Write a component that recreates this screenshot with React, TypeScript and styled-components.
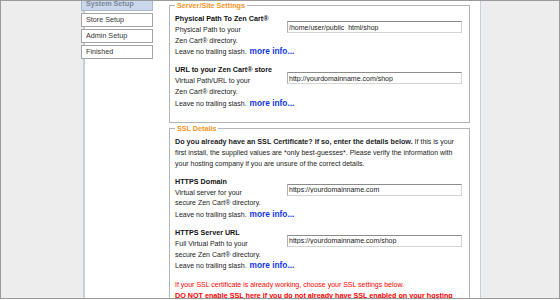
import React from "react";
import styled, { createGlobalStyle } from "styled-components";

const GlobalStyle = createGlobalStyle`
  html, body {
    margin: 0;
    padding: 0;
    background: #fff;
  }
  body {
    font-family: "Liberation Sans", Arial, sans-serif;
    color: #222;
  }
`;

const Frame = styled.div`
  width: 560px;
  height: 299px;
  box-sizing: border-box;
  border: 1px solid #9a9a9a;
  display: flex;
  overflow: hidden;
`;

const Gutter = styled.div<{ $side: "left" | "right" }>`
  flex: none;
  width: ${p => (p.$side === "left" ? "82px" : "78px")};
  background: #ededed;
  ${p => (p.$side === "left" ? "border-right: 2px solid #c6cfd9;" : "border-left: 1px solid #c6cfd9;")}
`;

const Main = styled.div`
  flex: none;
  width: 395px;
  display: flex;
  align-items: flex-start;
  background: #fff;
`;

const Nav = styled.nav`
  flex: none;
  width: 72px;
  margin: -4px 0 0 -4px;
  display: flex;
  flex-direction: column;
  gap: 2px;
`;

const NavButton = styled.div<{ $active?: boolean }>`
  height: 14px;
  box-sizing: border-box;
  padding: 0 4px;
  border: 1px solid ${p => (p.$active ? "#aab8cb" : "#a4a4a4")};
  background: ${p => (p.$active ? "#c9d8ec" : "#fff")};
  color: ${p => (p.$active ? "#7d8898" : "#333")};
  font-weight: ${p => (p.$active ? "bold" : "normal")};
  font-size: 7.2px;
  line-height: 12px;
  white-space: nowrap;
`;

const Content = styled.div`
  flex: 1;
  min-width: 0;
  margin-left: 16px;
  padding-right: 10px;
  display: flex;
  flex-direction: column;
  gap: 1px;
`;

const Box = styled.fieldset`
  margin: 0;
  min-width: 0;
  border: 1px solid #b4b4b4;
  padding: 4px 4px 6px 5px;
  font-size: 7px;
  line-height: 10.8px;

  b {
    font-size: 7.2px;
  }
`;

const Legend = styled.legend`
  padding: 0 2px;
  color: #f7941e;
  font-weight: bold;
  font-size: 7.2px;
  line-height: 9px;
`;

const Row = styled.div`
  display: flow-root;
  margin-bottom: 7px;
`;

const Field = styled.input`
  float: right;
  width: 175px;
  height: 12px;
  box-sizing: border-box;
  margin: 7px 3px 0 0;
  padding: 0 1px;
  border: 1px solid #d4d4d4;
  border-top-color: #8c8c8c;
  border-left-color: #b0b0b0;
  background: #fff;
  font-family: "Liberation Sans", Arial, sans-serif;
  font-size: 7px;
  line-height: 10px;
  color: #222;
  outline: none;
`;

const Title = styled.div`
  font-weight: bold;
  font-size: 7.2px;
  color: #111;
`;

const Line = styled.div`
  white-space: nowrap;
`;

const More = styled.a`
  color: #1238e6;
  font-weight: bold;
  font-size: 8.3px;
  text-decoration: none;
  margin-left: 3px;
`;

const Intro = styled.div`
  margin: 0 0 7px;
`;

const Warning = styled.div<{ $strong?: boolean }>`
  color: #f00;
  font-weight: ${p => (p.$strong ? "bold" : "normal")};
  font-size: ${p => (p.$strong ? "7.2px" : "7px")};
  white-space: nowrap;
`;

const WarningBlock = styled.div`
  margin-top: 8px;
`;

interface FieldRowProps {
  title: string;
  lines: string[];
  value: string;
}

const FieldRow = ({ title, lines, value }: FieldRowProps) => (
  <Row>
    <Field defaultValue={value} />
    <Title>{title}</Title>
    {lines.map(l => (
      <Line key={l}>{l}</Line>
    ))}
    <Line>
      Leave no trailing slash.<More href="#">more info...</More>
    </Line>
  </Row>
);

const steps = ["System Setup", "Store Setup", "Admin Setup", "Finished"];

export default function App() {
  return (
    <>
      <GlobalStyle />
      <Frame>
        <Gutter $side="left" />
        <Main>
          <Nav>
            {steps.map((s, i) => (
              <NavButton key={s} $active={i === 0}>
                {s}
              </NavButton>
            ))}
          </Nav>
          <Content>
            <Box>
              <Legend>Server/Site Settings</Legend>
              <FieldRow
                title="Physical Path To Zen Cart®"
                lines={["Physical Path to your", "Zen Cart® directory."]}
                value="/home/user/public_html/shop"
              />
              <FieldRow
                title="URL to your Zen Cart® store"
                lines={["Virtual Path/URL to your", "Zen Cart® directory."]}
                value="http://yourdomainname.com/shop"
              />
            </Box>
            <Box>
              <Legend>SSL Details</Legend>
              <Intro>
                <Line>
                  <b>Do you already have an SSL Certificate? If so, enter the details below.</b> If this is your
                </Line>
                <Line>
                  first install, the supplied values are *only best-guesses*. Please verify the information with
                </Line>
                <Line>your hosting company if you are unsure of the correct details.</Line>
              </Intro>
              <FieldRow
                title="HTTPS Domain"
                lines={["Virtual server for your", "secure Zen Cart® directory."]}
                value="https://yourdomainname.com"
              />
              <FieldRow
                title="HTTPS Server URL"
                lines={["Full Virtual Path to your", "secure Zen Cart® directory."]}
                value="https://yourdomainname.com/shop"
              />
              <WarningBlock>
                <Warning>If your SSL certificate is already working, choose your SSL settings below.</Warning>
                <Warning $strong>DO NOT enable SSL here if you do not already have SSL enabled on your hosting</Warning>
              </WarningBlock>
            </Box>
          </Content>
        </Main>
        <Gutter $side="right" />
      </Frame>
    </>
  );
}
